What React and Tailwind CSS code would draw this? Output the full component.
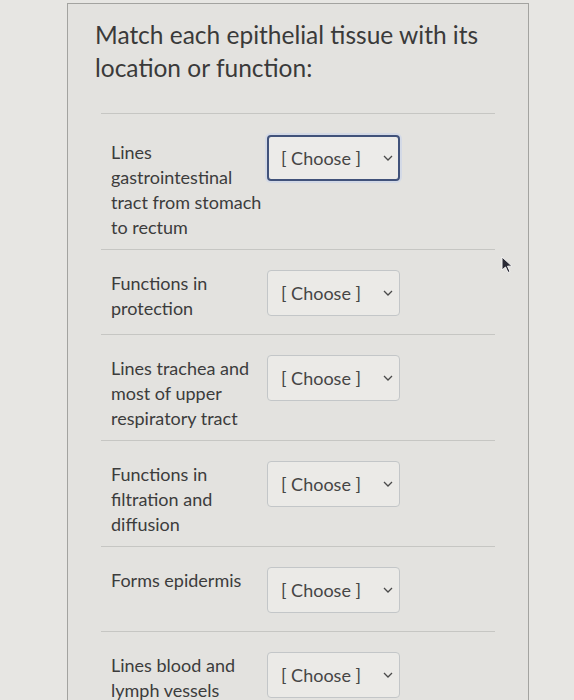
import React from 'react';

const items = [
  { label: 'Lines gastrointestinal tract from stomach to rectum', focused: true },
  { label: 'Functions in protection' },
  { label: 'Lines trachea and most of upper respiratory tract' },
  { label: 'Functions in filtration and diffusion' },
  { label: 'Forms epidermis' },
  { label: 'Lines blood and lymph vessels' },
];

const Chevron = () => (
  <svg width="10" height="6" viewBox="0 0 10 6" fill="none">
    <path d="M1 1l4 4 4-4" stroke="#4a4a4a" strokeWidth="1.3" />
  </svg>
);

const ChooseBox = ({ focused }) => (
  <div
    className={
      focused
        ? 'flex h-[46px] w-[133px] shrink-0 items-center justify-between rounded-[4px] border-2 border-[#41527a] bg-[#ecebe9] pl-[12px] pr-[5px] shadow-[0_0_0_2px_#d3d9e6]'
        : 'flex h-[46px] w-[133px] shrink-0 items-center justify-between rounded-[4px] border border-[#c3c6c8] bg-[#ebeae7] pl-[13px] pr-[6px]'
    }
  >
    <span className="text-[18px] text-[#454545]">[ Choose ]</span>
    <Chevron />
  </div>
);

const App = () => {
  return (
    <div className="relative h-[700px] w-[574px] overflow-hidden bg-[#e7e6e3] font-['Lato','Liberation_Sans',sans-serif]">
      <div className="ml-[67px] mt-[3px] min-h-[700px] w-[462px] border-l border-r border-t border-[#a3a3a0] bg-[#e3e2df]">
        <h1 className="pl-[27px] pt-[14px] text-[24.5px] leading-[33px] text-[#3a3a3a]">
          Match each epithelial tissue with its location or function:
        </h1>
        <div className="mx-[33px] mt-[29px]">
          {items.map((item, i) => (
            <div
              key={item.label}
              className={
                i === 0
                  ? 'flex items-start border-t border-[#c6c6c3] pb-[9px] pl-[10px] pt-[25px]'
                  : 'flex items-start border-t border-[#c6c6c3] pb-[9px] pl-[10px] pt-[20px]'
              }
            >
              <p className="mt-[1px] w-[156px] text-[18px] leading-[25px] text-[#3c3c3c]">{item.label}</p>
              <div className={i === 0 ? '-mt-[4px] pb-[9px]' : 'pb-[9px]'}>
                <ChooseBox focused={item.focused} />
              </div>
            </div>
          ))}
        </div>
      </div>
      <svg className="absolute left-[501px] top-[256px]" width="14" height="18" viewBox="0 0 14 18">
        <path d="M1 1v13l3.5-3 2.5 5.5 2-1-2.5-5.3H11z" fill="#2a2a35" stroke="#f4f4f4" strokeWidth="1" />
      </svg>
    </div>
  );
};

export default App;
